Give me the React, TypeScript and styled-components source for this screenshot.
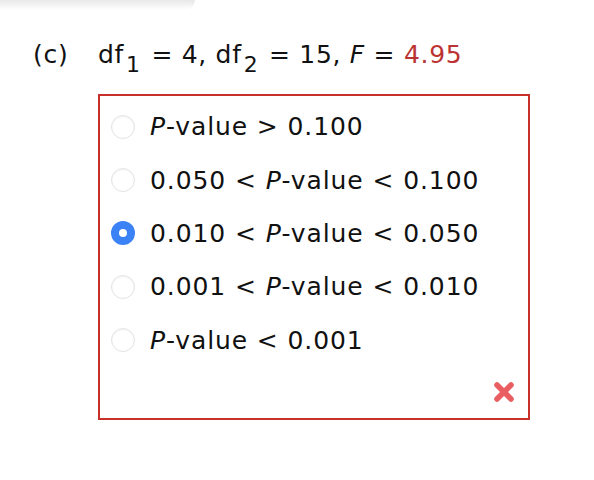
import styled, { createGlobalStyle } from 'styled-components'

const GlobalStyle = createGlobalStyle`
  body {
    margin: 0;
    background: #ffffff;
    font-family: "DejaVu Sans", Verdana, sans-serif;
    color: #111111;
  }
`

const Page = styled.div`
  width: 594px;
  height: 480px;
  background: #ffffff;
`

const TopShade = styled.div`
  width: 195px;
  height: 10px;
  background: linear-gradient(to bottom, #e8e8e8, #ffffff);
  border-bottom-right-radius: 60px;
`

const Question = styled.div`
  display: flex;
  align-items: baseline;
  margin: 30px 0 0 33px;
  font-size: 25px;
  line-height: 30px;
  height: 54px;
  letter-spacing: 0.7px;
`

const Part = styled.span`
  width: 65px;
`

const Sub = styled.sub`
  font-size: 22px;
  vertical-align: -9px;
  line-height: 0;
  margin: 0 2px;
`

const Var = styled.i`
  font-style: italic;
`

const Value = styled.span`
  color: #bb3333;
`

const AnswerBox = styled.div`
  display: flex;
  flex-direction: column;
  margin-left: 98px;
  width: 432px;
  height: 326px;
  box-sizing: border-box;
  border: 2px solid #c8302a;
  padding-top: 4px;
`

const Option = styled.label`
  display: flex;
  align-items: center;
  gap: 15px;
  height: 53.4px;
  padding-left: 11px;
  font-size: 25px;
  letter-spacing: 0.9px;
`

const Radio = styled.span<{ $checked: boolean }>`
  box-sizing: border-box;
  width: 24px;
  height: 24px;
  border-radius: 50%;
  flex-shrink: 0;
  ${({ $checked }) =>
    $checked
      ? `background: #ffffff; border: 8px solid #3b82f6;`
      : `background: #ffffff; border: 1px solid #e3e3e3; box-shadow: inset 0 1px 2px rgba(0,0,0,0.06);`}
`

const Footer = styled.div`
  margin-top: auto;
  display: flex;
  justify-content: flex-end;
  padding: 0 11px 13px 0;
`

const WrongMark = () => (
  <svg width="26" height="26" viewBox="0 0 26 26">
    <g stroke="#e8555b" strokeWidth="5.5" strokeLinecap="round" opacity="0.95">
      <line x1="6" y1="6" x2="20" y2="20" />
      <line x1="20" y1="6" x2="6" y2="20" />
    </g>
  </svg>
)

const options = [
  { key: 'a', body: <><Var>P</Var>-value &gt; 0.100</> },
  { key: 'b', body: <>0.050 &lt; <Var>P</Var>-value &lt; 0.100</> },
  { key: 'c', body: <>0.010 &lt; <Var>P</Var>-value &lt; 0.050</>, checked: true },
  { key: 'd', body: <>0.001 &lt; <Var>P</Var>-value &lt; 0.010</> },
  { key: 'e', body: <><Var>P</Var>-value &lt; 0.001</> },
]

export default function App() {
  return (
    <Page>
      <GlobalStyle />
      <TopShade />
      <Question>
        <Part>(c)</Part>
        <span>
          df<Sub>1</Sub> = 4, df<Sub>2</Sub> = 15, <Var>F</Var> = <Value>4.95</Value>
        </span>
      </Question>
      <AnswerBox>
        {options.map(o => (
          <Option key={o.key}>
            <Radio $checked={!!o.checked} />
            <span>{o.body}</span>
          </Option>
        ))}
        <Footer>
          <WrongMark />
        </Footer>
      </AnswerBox>
    </Page>
  )
}
